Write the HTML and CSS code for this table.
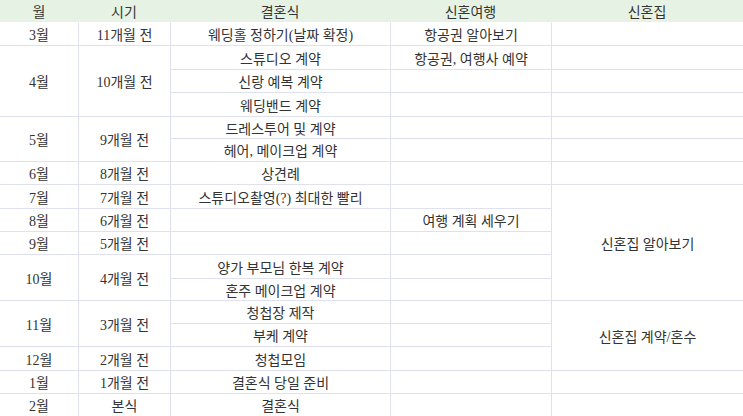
FILE: index.html
```html
<!DOCTYPE html>
<html lang="ko">
<head>
<meta charset="utf-8">
<title>결혼 준비 일정</title>
<link rel="stylesheet" href="styles.css">
</head>
<body>
<div class="sheet">
  <div class="hd">월</div><div class="hd">시기</div><div class="hd">결혼식</div><div class="hd">신혼여행</div><div class="hd">신혼집</div>

  <div class="c m first">3월</div><div class="c first">11개월 전</div><div class="c first">웨딩홀 정하기(날짜 확정)</div><div class="c first">항공권 알아보기</div><div class="c first"></div>

  <div class="c m r3">4월</div><div class="c r3">10개월 전</div><div class="c">스튜디오 계약</div><div class="c">항공권, 여행사 예약</div><div class="c"></div>
  <div class="c">신랑 예복 계약</div><div class="c"></div><div class="c"></div>
  <div class="c">웨딩밴드 계약</div><div class="c"></div><div class="c"></div>

  <div class="c m r2">5월</div><div class="c r2">9개월 전</div><div class="c">드레스투어 및 계약</div><div class="c"></div><div class="c"></div>
  <div class="c">헤어, 메이크업 계약</div><div class="c"></div><div class="c"></div>

  <div class="c m">6월</div><div class="c">8개월 전</div><div class="c">상견례</div><div class="c"></div><div class="c"></div>

  <div class="c m">7월</div><div class="c">7개월 전</div><div class="c">스튜디오촬영(?) 최대한 빨리</div><div class="c"></div><div class="c r5">신혼집 알아보기</div>

  <div class="c m">8월</div><div class="c">6개월 전</div><div class="c"></div><div class="c">여행 계획 세우기</div>

  <div class="c m">9월</div><div class="c">5개월 전</div><div class="c"></div><div class="c"></div>

  <div class="c m r2">10월</div><div class="c r2">4개월 전</div><div class="c">양가 부모님 한복 계약</div><div class="c"></div>
  <div class="c">혼주 메이크업 계약</div><div class="c"></div>

  <div class="c m r2">11월</div><div class="c r2">3개월 전</div><div class="c">청첩장 제작</div><div class="c"></div><div class="c r3">신혼집 계약/혼수</div>
  <div class="c">부케 계약</div><div class="c"></div>

  <div class="c m">12월</div><div class="c">2개월 전</div><div class="c">청첩모임</div><div class="c"></div>

  <div class="c m">1월</div><div class="c">1개월 전</div><div class="c">결혼식 당일 준비</div><div class="c"></div><div class="c"></div>

  <div class="c m">2월</div><div class="c">본식</div><div class="c">결혼식</div><div class="c"></div><div class="c"></div>
</div>
</body>
</html>
```
FILE: styles.css
```css
html, body {
  margin: 0;
  padding: 0;
  background: #ffffff;
}

.sheet {
  display: grid;
  grid-template-columns: 78px 92px 220px 161px 192px;
  grid-template-rows: 22px 23px 24px 23px 24px 22px 23px 23px 24px 23px 23px 24px 22px 23px 23px 24px 23px 23px;
  width: 743px;
  height: 416px;
  overflow: hidden;
  font-family: "Liberation Serif", "Noto Sans CJK KR", sans-serif;
  font-size: 14px;
  color: #333333;
}

.hd {
  display: flex;
  align-items: center;
  justify-content: center;
  background: #e6f3e4;
}

.c {
  display: flex;
  align-items: center;
  justify-content: center;
  white-space: nowrap;
  border-top: 1px solid #dfe2ee;
  border-left: 1px solid #dfe2ee;
  box-sizing: border-box;
}

.c.m {
  border-left: none;
}

.c.first {
  border-top-color: transparent;
}

.r2 { grid-row: span 2; }
.r3 { grid-row: span 3; }
.r5 { grid-row: span 5; }
```
